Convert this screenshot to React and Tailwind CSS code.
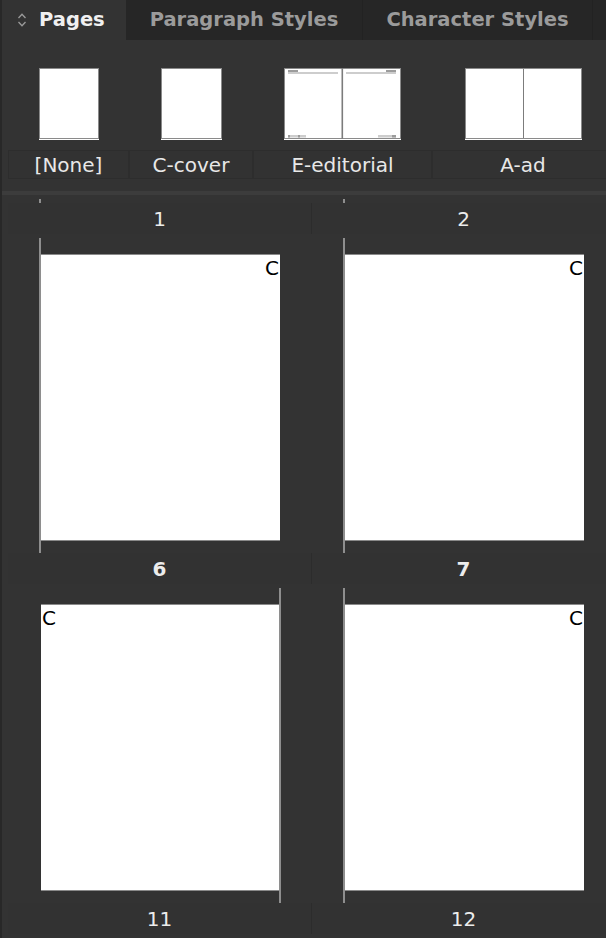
import React from "react";

function Chevrons() {
  return (
    <svg width="10" height="16" viewBox="0 0 10 16" fill="none">
      <path d="M1.5 6 L5 2.2 L8.5 6" stroke="#9a9a9a" strokeWidth="1.3" />
      <path d="M1.5 10 L5 13.8 L8.5 10" stroke="#9a9a9a" strokeWidth="1.3" />
    </svg>
  );
}

function EditorialThumb() {
  return (
    <svg width="117" height="71" viewBox="0 0 117 71" className="shadow-[0_1px_0_#ffffff]">
      <rect x="0.5" y="0.5" width="116" height="70" fill="#ffffff" stroke="#8a8a8a" />
      <rect x="57.5" y="0" width="1.6" height="71" fill="#7c7c7c" />
      <rect x="4" y="4" width="50" height="2" fill="#cdcdcd" />
      <rect x="4" y="2" width="10" height="2" fill="#9c9c9c" />
      <rect x="62" y="4" width="50" height="2" fill="#cdcdcd" />
      <rect x="102" y="2" width="10" height="2" fill="#9c9c9c" />
      <rect x="4" y="67" width="18" height="2.5" fill="#cdcdcd" />
      <rect x="4" y="67" width="2" height="2.5" fill="#9c9c9c" />
      <rect x="14" y="67" width="2" height="2.5" fill="#9c9c9c" />
      <rect x="94" y="67" width="18" height="2.5" fill="#cdcdcd" />
      <rect x="108" y="67" width="4" height="2.5" fill="#9c9c9c" />
    </svg>
  );
}

function SingleThumb({ w }) {
  return (
    <div
      className={`${w} h-[71px] bg-white border border-[#8a8a8a] shadow-[0_1px_0_#ffffff]`}
    />
  );
}

function AdThumb() {
  return (
    <div className="w-[117px] h-[71px] bg-white border border-[#8a8a8a] shadow-[0_1px_0_#ffffff] flex">
      <div className="w-[57px] h-full" />
      <div className="w-[1.5px] h-full bg-[#7c7c7c]" />
      <div className="flex-1 h-full" />
    </div>
  );
}

function MasterCol({ width, thumb, label }) {
  return (
    <div className={`${width} shrink-0 flex flex-col items-center`}>
      {thumb}
      <div className="mt-[11px] h-[29px] w-full bg-[#323232] border border-[#2d2d2d] flex items-center justify-center">
        <span className="text-[20px] leading-normal text-[#e8e8e8] whitespace-nowrap">{label}</span>
      </div>
    </div>
  );
}

function Page({ spine, marker }) {
  const pageBox = (
    <div
      className={`mt-[16px] ${spine === "left" ? "w-[239px]" : "w-[238px]"} h-[287px] bg-white border-y border-[#8a8a8a] flex ${
        marker === "right" ? "justify-end pr-[1px]" : "justify-start pl-[1px]"
      } items-start`}
    >
      {marker && <span className="pt-[3px] text-[20px] leading-none text-black">C</span>}
    </div>
  );
  return (
    <div className={`h-[315px] flex items-start ${spine === "left" ? "pl-[31px]" : "pl-[33px]"}`}>
      {spine === "left" && <div className="w-[2px] h-[315px] bg-[#8e8e8e] shrink-0" />}
      {pageBox}
      {spine === "right" && <div className="w-[2px] h-[315px] bg-[#8e8e8e] shrink-0" />}
    </div>
  );
}

function PageRow({ pages, labels, bold }) {
  return (
    <div className="h-[350px] flex flex-col pl-[6px]">
      <div className="h-[315px] shrink-0 grid grid-cols-[303px_303px] gap-x-[1px]">
        {pages.map((p, i) => (
          <Page key={i} spine={p.spine} marker={p.marker} />
        ))}
      </div>
      <div className="h-[31px] shrink-0 grid grid-cols-[303px_303px] gap-x-[1px] bg-[#2c2c2c]">
        {labels.map((l) => (
          <div key={l} className="bg-[#323232] flex items-center justify-center">
            <span
              className={`text-[20px] leading-normal text-[#ececec] ${bold ? "font-bold" : "font-normal"}`}
            >
              {l}
            </span>
          </div>
        ))}
      </div>
    </div>
  );
}

export default function App() {
  return (
    <div className="w-[606px] h-[938px] overflow-hidden bg-[#333333] flex font-['DejaVu_Sans','Liberation_Sans',sans-serif]">
      <div className="w-[2px] shrink-0 bg-[#282828]" />
      <div className="flex-1 min-w-0 flex flex-col">
        {/* Tabs */}
        <div className="h-[40px] shrink-0 flex bg-[#262626]">
          <div className="w-[124px] shrink-0 bg-[#333333] flex items-center pl-[15px] gap-[12px]">
            <Chevrons />
            <span className="text-[19.5px] font-bold leading-normal text-[#f0f0f0]">Pages</span>
          </div>
          <div className="w-[237px] shrink-0 flex items-center justify-center border-r border-[#222222]">
            <span className="text-[19.5px] font-bold leading-normal text-[#9b9b9b] whitespace-nowrap">
              Paragraph Styles
            </span>
          </div>
          <div className="w-[230px] shrink-0 flex items-center justify-center border-r border-[#222222]">
            <span className="text-[19.5px] font-bold leading-normal text-[#9b9b9b] whitespace-nowrap">
              Character Styles
            </span>
          </div>
          <div className="flex-1" />
        </div>

        {/* Masters */}
        <div className="h-[151px] shrink-0 flex pl-[6px] pt-[28px]">
          <MasterCol width="w-[121px]" thumb={<SingleThumb w="w-[60px]" />} label="[None]" />
          <MasterCol width="w-[124px]" thumb={<SingleThumb w="w-[61px]" />} label="C-cover" />
          <MasterCol width="w-[179px]" thumb={<EditorialThumb />} label="E-editorial" />
          <MasterCol width="w-[182px]" thumb={<AdThumb />} label="A-ad" />
        </div>

        {/* Separator */}
        <div className="h-[4px] shrink-0 bg-[#3c3c3c]" />
        <div className="h-[4px] shrink-0" />

        {/* Pages (scrolled) */}
        <div className="flex-1 overflow-hidden">
          <div className="-mt-[311px]">
            <PageRow
              pages={[
                { spine: "left", marker: null },
                { spine: "left", marker: null },
              ]}
              labels={["1", "2"]}
            />
            <PageRow
              pages={[
                { spine: "left", marker: "right" },
                { spine: "left", marker: "right" },
              ]}
              labels={["6", "7"]}
              bold
            />
            <PageRow
              pages={[
                { spine: "right", marker: "left" },
                { spine: "left", marker: "right" },
              ]}
              labels={["11", "12"]}
            />
          </div>
        </div>
      </div>
    </div>
  );
}
